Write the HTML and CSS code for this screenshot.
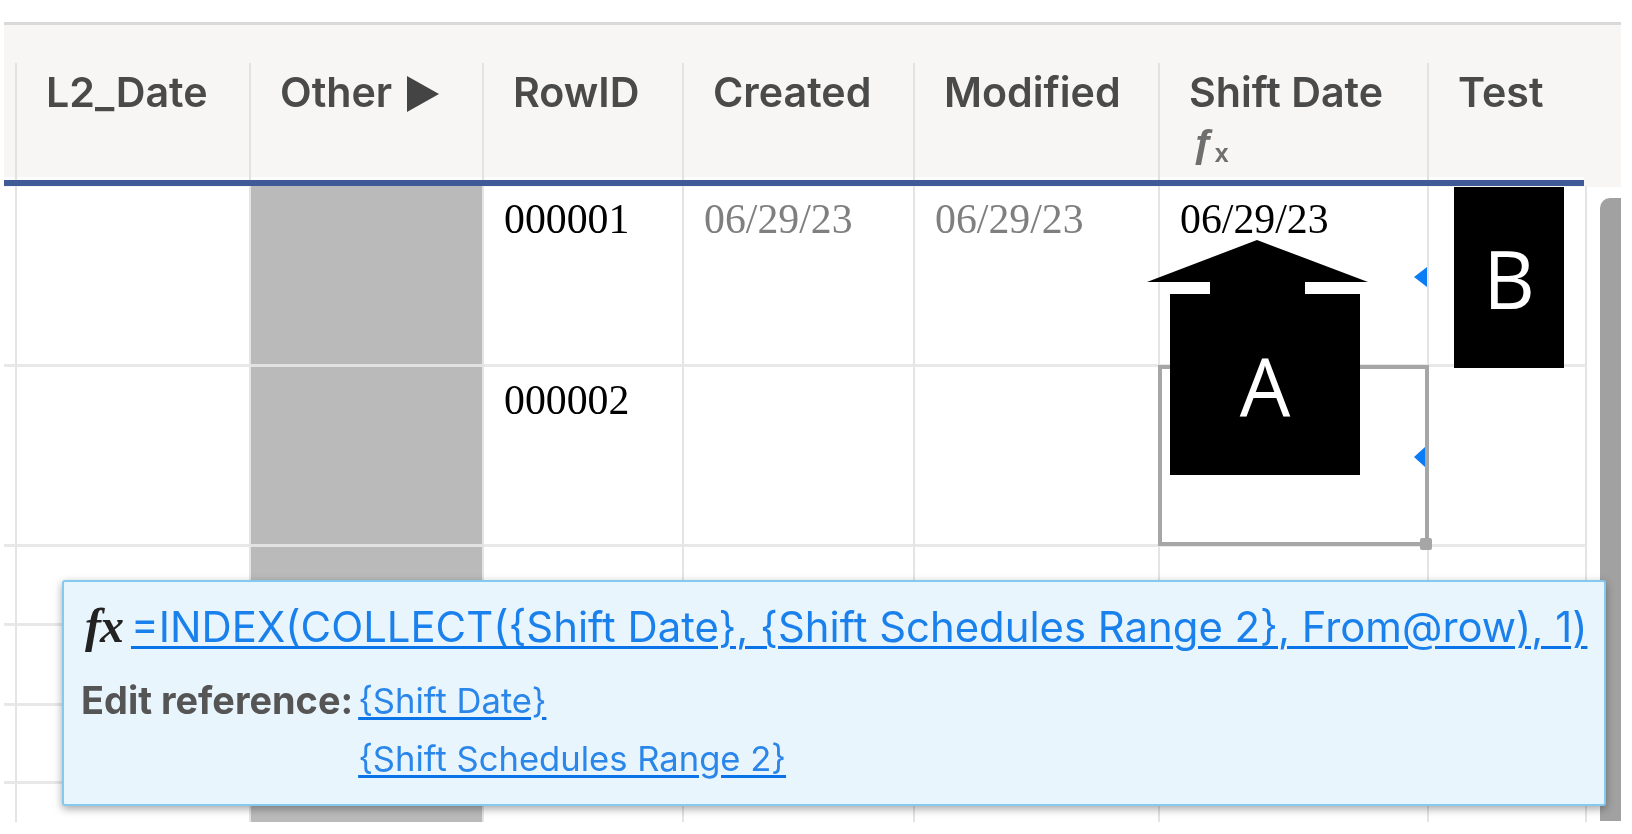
FILE: index.html
```html
<!DOCTYPE html>
<html lang="en">
<head>
<meta charset="utf-8">
<title>Shift Date formula</title>
<link rel="stylesheet" href="styles.css">
</head>
<body>
<main class="sheet">
  <div class="head">
    <div class="th th-edge"></div>
    <div class="th">L2_Date</div>
    <div class="th">Other<svg class="expand" viewBox="0 0 32 36" aria-hidden="true"><polygon points="0,0 32,18 0,36"/></svg></div>
    <div class="th">RowID</div>
    <div class="th">Created</div>
    <div class="th">Modified</div>
    <div class="th">Shift Date<div class="fx-head"><span class="fx-f">ƒ</span><b>x</b></div></div>
    <div class="th th-end">Test</div>
    <div class="th-rest"></div>
  </div>
  <div class="body">
    <div class="rows">
      <div class="td"></div><div class="td"></div><div class="td grey"></div><div class="td val">000001</div><div class="td val muted">06/29/23</div><div class="td val muted">06/29/23</div><div class="td val">06/29/23<span class="marker"></span></div><div class="td"></div>
      <div class="td"></div><div class="td"></div><div class="td grey"></div><div class="td val">000002</div><div class="td"></div><div class="td"></div><div class="td selected"><span class="marker marker-sel"></span><span class="handle"></span></div><div class="td"></div>
      <div class="td"></div><div class="td"></div><div class="td grey"></div><div class="td"></div><div class="td"></div><div class="td"></div><div class="td"></div><div class="td"></div>
      <div class="td"></div><div class="td"></div><div class="td grey"></div><div class="td"></div><div class="td"></div><div class="td"></div><div class="td"></div><div class="td"></div>
      <div class="td"></div><div class="td"></div><div class="td grey"></div><div class="td"></div><div class="td"></div><div class="td"></div><div class="td"></div><div class="td"></div>
      <div class="td last"></div><div class="td last"></div><div class="td last grey"></div><div class="td last"></div><div class="td last"></div><div class="td last"></div><div class="td last"></div><div class="td last"></div>
    </div>
    <div class="gutter"><div class="thumb"></div></div>
  </div>

  <section class="tip">
    <div class="tip-formula">
      <span class="tip-fx"><i>fx</i></span>
      <a class="formula" href="#">=INDEX(COLLECT({Shift Date}, {Shift Schedules Range 2}, From@row), 1)</a>
    </div>
    <div class="tip-refs">
      <span class="refs-label">Edit reference:</span>
      <div class="refs-list">
        <a class="ref" href="#">{Shift Date}</a>
        <a class="ref" href="#">{Shift Schedules Range 2}</a>
      </div>
    </div>
  </section>

  <svg class="arrow" viewBox="0 0 221 54" aria-hidden="true"><polygon points="110,0 221,42 158,42 158,54 63,54 63,42 0,42"/></svg>
  <div class="callout callout-a">A</div>
  <div class="callout callout-b">B</div>
</main>
</body>
</html>
```

FILE: styles.css
```css
* { box-sizing: border-box; }
html, body { margin: 0; background: #fff; }
body { padding: 22px 0 0 4px; height: 834px; overflow: hidden; }

.sheet {
  position: relative;
  width: 1617px;
  height: 800px;
  overflow: hidden;
}

/* header */
.head {
  display: grid;
  grid-template-columns: 13px 234px 233px 200px 231px 245px 269px 158px 34px;
  align-items: stretch;
  height: 165px;
  padding-top: 38px;
  border-top: 3px solid #d9d9d9;
  background: #f7f6f4;
  filter: blur(.4px);
}
.th {
  position: relative;
  height: 123px;
  padding: 0 0 0 29px;
  border-right: 2px solid #e2e2e2;
  box-shadow: inset 0 -9px 0 #fcfcfb;
  font: 600 41.2px/58px Inter, "Liberation Sans", sans-serif;
  color: #4a4a4a;
  white-space: nowrap;
}
.th::after {
  content: "";
  position: absolute;
  left: 0;
  right: -2px;
  bottom: 0;
  height: 6px;
  background: #3f5a96;
}
.th-edge { padding: 0; }
.th-end { border-right: 0; margin-right: 3px; }
.th-end::after { right: 0; }
.expand { width: 32px; height: 36px; margin-left: 15px; fill: #444; vertical-align: -5px; }
.fx-head { display: flex; align-items: flex-end; height: 44px; margin-left: 3px; color: #6f6f6f; }
.fx-f { font: 700 41px/44px "Liberation Sans", sans-serif; }
.fx-head b { font: 700 25px/24px "Liberation Sans", sans-serif; }

/* body */
.body { display: flex; height: 635px; margin-top: -1px; filter: blur(.4px); }
.rows {
  display: grid;
  width: 1583px;
  grid-template-columns: 13px 234px 233px 200px 231px 245px 269px 158px;
  grid-template-rows: 181px 180px 79px 80px 78px 38px;
}
.td {
  position: relative;
  border-right: 2px solid #e4e4e4;
  border-bottom: 3px solid #e8e8e8;
  font: 400 41.8px/50px "Liberation Serif", serif;
  color: #000;
}
.val { padding: 8px 0 0 20px; }
.td.last { border-bottom: 0; }
.grey { background: #bababa; border-bottom-color: #e2e2e2; }
.muted { color: #7f7f7f; }

.marker {
  position: absolute;
  right: 0;
  top: 81px;
  width: 13px;
  height: 20px;
  background: #0a7cf5;
  clip-path: polygon(0 50%, 100% 0, 100% 100%);
}
.selected { z-index: 1; }
.selected::after {
  content: "";
  position: absolute;
  inset: -2px;
  border: 4px solid #a6a6a6;
}
.marker-sel { right: 2px; top: 80px; width: 11px; z-index: 1; }
.handle {
  position: absolute;
  right: -5px;
  bottom: -6px;
  width: 12px;
  height: 12px;
  border-radius: 2px;
  background: #a6a6a6;
  z-index: 1;
}

.gutter { width: 34px; padding: 12px 0 0 13px; }
.thumb { width: 21px; height: 100%; border-radius: 10px 0 0 0; background: #a1a1a1; }

/* formula tooltip */
.tip {
  position: absolute;
  left: 58px;
  top: 558px;
  width: 1544px;
  height: 226px;
  padding: 16px 0 0 21px;
  border: 2px solid #86c9ef;
  border-radius: 3px;
  background: #e9f5fc;
  box-shadow: 0 3px 9px rgba(0, 0, 0, .35);
  z-index: 2;
  filter: blur(.3px);
}
.tip-formula { display: flex; align-items: baseline; gap: 8px; height: 64px; }
.tip-fx { font: italic 700 48px/56px "Liberation Serif", serif; color: #222; }
.tip-fx i { letter-spacing: -1px; }
.formula {
  font: 400 41.85px/56px Inter, "Liberation Sans", sans-serif;
  color: #1a80ec;
  text-decoration: underline;
  text-decoration-color: #0a73e8;
  text-decoration-thickness: 3px;
  text-underline-offset: 4px;
  white-space: nowrap;
}
.tip-refs { display: flex; align-items: flex-start; margin-top: 15px; margin-left: -4px; gap: 5px; }
.refs-label { font: 700 37.9px/46px Inter, "Liberation Sans", sans-serif; color: #555; white-space: nowrap; }
.refs-list { display: flex; flex-direction: column; gap: 12px; align-items: flex-start; }
.ref {
  font: 400 34.6px/46px Inter, "Liberation Sans", sans-serif;
  color: #2b86ea;
  text-decoration: underline;
  text-decoration-color: #0a73e8;
  text-decoration-thickness: 3px;
  text-underline-offset: 4px;
  white-space: nowrap;
}

/* annotations */
.arrow { position: absolute; left: 1143px; top: 218px; width: 221px; height: 54px; fill: #000; z-index: 3; }
.callout {
  position: absolute;
  display: flex;
  align-items: center;
  justify-content: center;
  background: #000;
  color: #fff;
  font: 400 80px/1 "Open Sans", sans-serif;
  z-index: 3;
}
.callout-a { left: 1166px; top: 272px; width: 190px; height: 181px; }
.callout-b { left: 1450px; top: 165px; width: 110px; height: 181px; }
```
